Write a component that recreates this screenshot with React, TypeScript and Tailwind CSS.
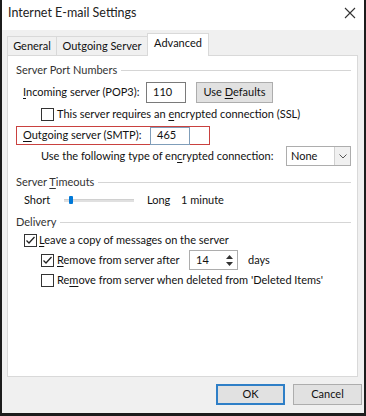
import React from "react";

const U = ({ children }: { children: React.ReactNode }) => (
  <span className="underline underline-offset-2">{children}</span>
);

function CheckBox({ checked }: { checked?: boolean }) {
  return (
    <div className="w-[13px] h-[13px] border border-[#333333] bg-white flex items-center justify-center shrink-0">
      {checked && (
        <svg width="11" height="11" viewBox="0 0 11 11">
          <path d="M1.5 5.5 L4 8 L9.5 2" fill="none" stroke="#222" strokeWidth="1.3" />
        </svg>
      )}
    </div>
  );
}

function GroupTitle({ children }: { children: React.ReactNode }) {
  return (
    <div className="h-[14px] flex items-center gap-[4px] pr-[6px]">
      <span className="text-[#333] leading-none whitespace-nowrap">{children}</span>
      <div className="flex-1 h-px bg-[#d5d5d5] mt-[2px]" />
    </div>
  );
}

export default function App() {
  return (
    <div
      className="w-[366px] h-[416px] bg-[#f0f0f0] border-l-2 border-r-2 border-b-[3px] border-[#1c1c1c] flex flex-col text-[11px] text-[#111] whitespace-nowrap"
      style={{ fontFamily: 'Lato, "Liberation Sans", sans-serif' }}
    >
      {/* title bar */}
      <div className="h-[30px] bg-white flex items-center justify-between pl-[6px] pr-[6px] shrink-0">
        <span className="text-[12.5px] text-[#222] mt-[-3px]">Internet E-mail Settings</span>
        <svg width="12" height="12" viewBox="0 0 12 12" className="mt-[-4px] mr-[2px]">
          <path d="M1 1 L11 11 M11 1 L1 11" stroke="#333" strokeWidth="1.1" />
        </svg>
      </div>

      {/* tabs */}
      <div className="flex items-end pl-[5px] pt-[3px] h-[25px] shrink-0">
        <div className="w-[49px] h-[19px] flex items-center justify-center border-t border-l border-[#d9d9d9] bg-[#f0f0f0]">
          General
        </div>
        <div className="w-[91px] h-[19px] flex items-center justify-center border-t border-l border-[#d9d9d9] bg-[#f0f0f0]">
          Outgoing Server
        </div>
        <div className="w-[62px] h-[23px] pb-[4px] flex items-center justify-center border-t border-l border-r border-[#d9d9d9] bg-white -mb-px relative z-10">
          Advanced
        </div>
      </div>

      {/* panel */}
      <div className="ml-[5px] mr-[6px] h-[322px] bg-white border border-[#d9d9d9] pt-[6px] pl-[8px] flex flex-col shrink-0">
        <GroupTitle>Server Port Numbers</GroupTitle>

        <div className="mt-[6px] h-[21px] flex items-center pl-[7px]">
          <span className="w-[123px] shrink-0">
            <U>I</U>ncoming server (POP3):
          </span>
          <div className="w-[40px] h-[21px] border border-[#7a7a7a] flex items-center pl-[6px] shrink-0">110</div>
          <div className="ml-[10px] w-[77px] h-[21px] bg-[#e1e1e1] border border-[#adadad] flex items-center justify-center shrink-0">
            Use&nbsp;<U>D</U>efaults
          </div>
        </div>

        <div className="mt-[4px] h-[14px] flex items-center gap-[3px] pl-[25px]">
          <CheckBox />
          <span>
            This server requires an <U>e</U>ncrypted connection (SSL)
          </span>
        </div>

        <div className="mt-[5px] w-[194px] h-[19px] border border-[#c9413f] flex items-center pl-[6px]">
          <span className="w-[127px] shrink-0">
            <U>O</U>utgoing server (SMTP):
          </span>
          <div className="w-[40px] h-[18px] border border-[#7f9db9] flex items-center pl-[6px] shrink-0">465</div>
        </div>

        <div className="mt-[1px] h-[20px] flex items-center pl-[25px]">
          <span className="w-[245px] shrink-0">
            Use the following type of en<U>c</U>rypted connection:
          </span>
          <div className="w-[65px] h-[20px] border border-[#adadad] flex shrink-0">
            <div className="flex-1 flex items-center pl-[4px]">None</div>
            <div className="w-[16px] border-l border-[#d0d0d0] bg-[#f0f0f0] flex items-center justify-center">
              <svg width="8" height="5" viewBox="0 0 8 5">
                <path d="M0.5 0.5 L4 4 L7.5 0.5" fill="none" stroke="#555" strokeWidth="1" />
              </svg>
            </div>
          </div>
        </div>

        <div className="mt-[8px]">
          <GroupTitle>
            Server <U>T</U>imeouts
          </GroupTitle>
        </div>

        <div className="mt-[5px] h-[14px] flex items-center pl-[8px]">
          <span className="w-[40px] shrink-0">Short</span>
          <div className="relative w-[70px] h-[14px] flex items-center shrink-0">
            <div className="w-full h-[3px] bg-[#e0e0e0] border-t border-[#d0d0d0]" />
            <div className="absolute left-[5px] top-[3px] w-[4px] h-[8px] rounded-[1px] bg-[#0078d7]" />
          </div>
          <span className="ml-[13px] w-[34px] shrink-0">Long</span>
          <span>1 minute</span>
        </div>

        <div className="mt-[7px]">
          <GroupTitle>Delivery</GroupTitle>
        </div>

        <div className="mt-[5px] h-[14px] flex items-center gap-[2px] pl-[8px]">
          <CheckBox checked />
          <span>
            <U>L</U>eave a copy of messages on the server
          </span>
        </div>

        <div className="mt-[3px] h-[20px] flex items-center pl-[25px]">
          <CheckBox checked />
          <span className="ml-[3px] w-[132px] shrink-0">
            <U>R</U>emove from server after
          </span>
          <div className="w-[49px] h-[20px] border border-[#adadad] flex shrink-0">
            <div className="flex-1 flex items-center pl-[6px]">14</div>
            <div className="w-[15px] flex flex-col items-center justify-center gap-[3px]">
              <svg width="7" height="4" viewBox="0 0 7 4">
                <path d="M0 4 L3.5 0 L7 4 Z" fill="#333" />
              </svg>
              <svg width="7" height="4" viewBox="0 0 7 4">
                <path d="M0 0 L3.5 4 L7 0 Z" fill="#333" />
              </svg>
            </div>
          </div>
          <span className="ml-[10px]">days</span>
        </div>

        <div className="mt-[3px] h-[14px] flex items-center gap-[3px] pl-[25px]">
          <CheckBox />
          <span>
            Re<U>m</U>ove from server when deleted from 'Deleted Items'
          </span>
        </div>
      </div>

      {/* footer */}
      <div className="flex justify-end gap-[8px] pr-[2px] pt-[7px]">
        <div className="w-[69px] h-[21px] bg-[#e1e1e1] border-2 border-[#2f7fc7] flex items-center justify-center">OK</div>
        <div className="w-[69px] h-[21px] bg-[#e1e1e1] border border-[#adadad] flex items-center justify-center">Cancel</div>
      </div>
    </div>
  );
}
